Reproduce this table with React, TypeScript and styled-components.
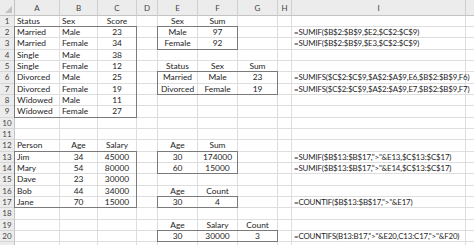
import styled, { createGlobalStyle } from "styled-components";

const COL_W = [15, 45, 38, 39, 21, 40, 40, 40, 14, 174, 40]
// J sits past the right edge, so its letter is not shown
const LETTERS = ['A', 'B', 'C', 'D', 'E', 'F', 'G', 'H', 'I', '']
const HEAD_H = 15.5
const ROW_H = 11.35
const ROWS = 21
const SHOWN_ROWS = 20

type Align = 'left' | 'center'
type Entry = [number, string, Align?]

// col index: 1 = A ... 9 = I
const data: Record<number, Entry[]> = {
  1: [[1, 'Status'], [2, 'Sex', 'left'], [3, 'Score'], [5, 'Sex'], [6, 'Sum']],
  2: [[1, 'Married'], [2, 'Male', 'left'], [3, '23'], [5, 'Male'], [6, '97'], [9, '=SUMIF($B$2:$B$9,$E2,$C$2:$C$9)']],
  3: [[1, 'Married'], [2, 'Female', 'left'], [3, '34'], [5, 'Female'], [6, '92'], [9, '=SUMIF($B$2:$B$9,$E3,$C$2:$C$9)']],
  4: [[1, 'Single'], [2, 'Male', 'left'], [3, '38']],
  5: [[1, 'Single'], [2, 'Female', 'left'], [3, '12'], [5, 'Status'], [6, 'Sex'], [7, 'Sum']],
  6: [[1, 'Divorced'], [2, 'Male', 'left'], [3, '25'], [5, 'Married'], [6, 'Male'], [7, '23'], [9, '=SUMIFS($C$2:$C$9,$A$2:$A$9,E6,$B$2:$B$9,F6)']],
  7: [[1, 'Divorced'], [2, 'Female', 'left'], [3, '19'], [5, 'Divorced'], [6, 'Female'], [7, '19'], [9, '=SUMIFS($C$2:$C$9,$A$2:$A$9,E7,$B$2:$B$9,F7)']],
  8: [[1, 'Widowed'], [2, 'Male', 'left'], [3, '11']],
  9: [[1, 'Widowed'], [2, 'Female', 'left'], [3, '27']],
  12: [[1, 'Person'], [2, 'Age'], [3, 'Salary'], [5, 'Age'], [6, 'Sum']],
  13: [[1, 'Jim'], [2, '34'], [3, '45000'], [5, '30'], [6, '174000'], [9, '=SUMIF($B$13:$B$17,">"&E13,$C$13:$C$17)']],
  14: [[1, 'Mary'], [2, '54'], [3, '80000'], [5, '60'], [6, '15000'], [9, '=SUMIF($B$13:$B$17,">"&E14,$C$13:$C$17)']],
  15: [[1, 'Dave'], [2, '23'], [3, '30000']],
  16: [[1, 'Bob'], [2, '44'], [3, '34000'], [5, 'Age'], [6, 'Count']],
  17: [[1, 'Jane'], [2, '70'], [3, '15000'], [5, '30'], [6, '4'], [9, '=COUNTIF($B$13:$B$17,">"&E17)']],
  19: [[5, 'Age'], [6, 'Salary'], [7, 'Count']],
  20: [[5, '30'], [6, '30000'], [7, '3'], [9, '=COUNTIFS(B13:B17,">"&E20,C13:C17,">"&F20)']],
}

// boxes: [col from, col to, row from, row to]
const boxes = [
  [1, 3, 2, 9],
  [5, 6, 2, 3],
  [5, 7, 6, 7],
  [1, 3, 13, 17],
  [5, 6, 13, 14],
  [5, 6, 17, 17],
  [5, 7, 20, 20],
]

const defaultAlign = (col: number): Align => (col === 1 || col === 9 ? 'left' : 'center')

const App = () => {
  const cells = []
  cells.push(<Corner key="corner" $c={1} $r={1} />)
  LETTERS.forEach((l, i) => {
    cells.push(<ColHead key={'h' + i} $c={i + 2} $r={1}>{l}</ColHead>)
  })
  for (let r = 1; r <= ROWS; r++) {
    cells.push(<RowHead key={'r' + r} $c={1} $r={r + 1}>{r <= SHOWN_ROWS ? r : ''}</RowHead>)
    const row = data[r] || []
    for (let c = 1; c <= LETTERS.length; c++) {
      const entry = row.find(e => e[0] === c)
      const align = entry ? entry[2] || defaultAlign(c) : 'left'
      cells.push(
        <Cell key={r + '-' + c} $c={c + 1} $r={r + 1} $align={align} $formula={c === 9}>
          {entry ? entry[1] : ''}
        </Cell>
      )
    }
  }

  return (
    <>
      <GlobalStyle />
      <Sheet>
        {cells}
        {boxes.map(([c1, c2, r1, r2], i) => (
          <Box key={i} $c={`${c1 + 1} / ${c2 + 2}`} $r={`${r1 + 1} / ${r2 + 2}`} />
        ))}
      </Sheet>
    </>
  )
};

export default App

const GlobalStyle = createGlobalStyle`
  html, body {
    margin: 0;
    padding: 0;
    background: #ffffff;
    overflow: hidden;
  }
`

const Sheet = styled.div`
  display: grid;
  grid-template-columns: ${COL_W.map(w => w + 'px').join(' ')};
  grid-template-rows: ${HEAD_H}px repeat(${ROWS}, ${ROW_H}px);
  width: 474px;
  height: 245px;
  overflow: hidden;
  font-family: Lato, "Liberation Sans", sans-serif;
  font-size: 8.4px;
  color: #1e1e1e;
`

type Pos = { $c: number | string; $r: number | string }

const Cell = styled.div<Pos & { $align: Align; $formula?: boolean }>`
  grid-column: ${p => p.$c};
  grid-row: ${p => p.$r};
  box-sizing: border-box;
  border-right: 1px solid #dedede;
  border-bottom: 1px solid #dedede;
  padding: 0 2px;
  line-height: ${ROW_H - 1}px;
  text-align: ${p => p.$align};
  white-space: nowrap;
  overflow: visible;
  position: relative;
  z-index: ${p => (p.$formula ? 2 : 0)};
  font-size: ${p => (p.$formula ? '7.9px' : 'inherit')};
  letter-spacing: ${p => (p.$formula ? '-0.15px' : 'normal')};
`

const ColHead = styled.div<Pos>`
  grid-column: ${p => p.$c};
  grid-row: ${p => p.$r};
  box-sizing: border-box;
  background: #ececec;
  border-right: 1px solid #d0d0d0;
  border-bottom: 1px solid #c4c4c4;
  color: #454545;
  font-size: 8px;
  line-height: ${HEAD_H - 1}px;
  padding-top: 1px;
  text-align: center;
`

const RowHead = styled.div<Pos>`
  grid-column: ${p => p.$c};
  grid-row: ${p => p.$r};
  box-sizing: border-box;
  background: #ececec;
  border-right: 1px solid #c4c4c4;
  border-bottom: 1px solid #d6d6d6;
  color: #454545;
  font-size: 8px;
  line-height: ${ROW_H - 1}px;
  text-align: center;
`

const Corner = styled.div<Pos>`
  grid-column: ${p => p.$c};
  grid-row: ${p => p.$r};
  box-sizing: border-box;
  background: #ececec;
  border-right: 1px solid #c4c4c4;
  border-bottom: 1px solid #c4c4c4;
  display: flex;
  align-items: flex-end;
  justify-content: flex-end;
  padding: 2px;
  &::after {
    content: "";
    width: 0;
    height: 0;
    border-left: 7px solid transparent;
    border-bottom: 7px solid #c2c2c2;
  }
`

const Box = styled.div<Pos>`
  grid-column: ${p => p.$c};
  grid-row: ${p => p.$r};
  margin: -1px 0 0 -1px;
  border: 1px solid #7b7b7b;
  pointer-events: none;
  z-index: 3;
`
